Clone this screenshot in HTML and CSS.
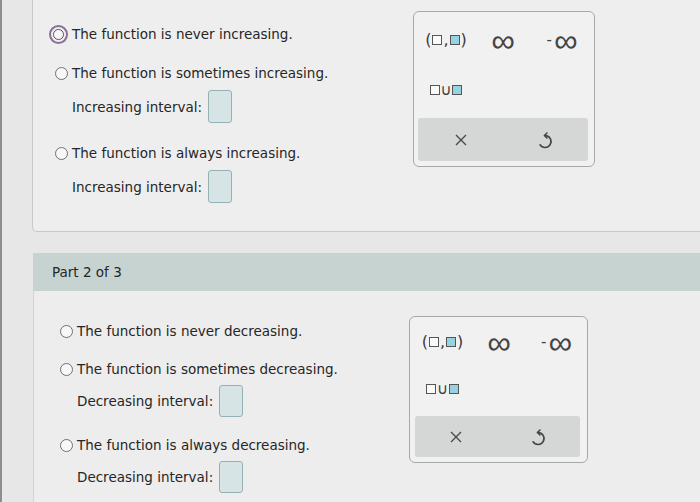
FILE: index.html
```html
<!DOCTYPE html>
<html>
<head>
<meta charset="utf-8">
<link rel="stylesheet" href="styles.css">
</head>
<body>
<div class="page">
  <section class="card">
    <div class="options">
      <div class="opt">
        <span class="radio-slot"><span class="radio selected"></span></span>
        <span class="label">The function is never increasing.</span>
      </div>
      <div class="opt">
        <span class="radio-slot"><span class="radio"></span></span>
        <span class="label">The function is sometimes increasing.</span>
      </div>
      <div class="interval">
        <span>Increasing interval:</span><span class="box"></span>
      </div>
      <div class="opt">
        <span class="radio-slot"><span class="radio"></span></span>
        <span class="label">The function is always increasing.</span>
      </div>
      <div class="interval">
        <span>Increasing interval:</span><span class="box"></span>
      </div>
    </div>
    <div class="palette">
      <div class="keys">
        <span class="key">(<i class="sq"></i>,<i class="sq fill"></i>)</span>
        <span class="key inf">∞</span>
        <span class="key inf"><span class="minus">-</span>∞</span>
        <span class="key union"><i class="sq"></i>∪<i class="sq fill"></i></span>
      </div>
      <div class="bar">
        <span class="act">
          <svg width="12" height="12" viewBox="0 0 12 12"><path d="M1 1 L11 11 M11 1 L1 11" stroke="#4a4a4a" stroke-width="1.4" fill="none"/></svg>
        </span>
        <span class="act">
          <svg width="15" height="18" viewBox="0 0 15 18"><path d="M7 4.5 A6 6 0 1 1 2 13.8" stroke="#444" stroke-width="1.6" fill="none" stroke-linecap="round"/><path d="M9 2 L6.4 4.5 L9 7" stroke="#444" stroke-width="1.6" fill="none" stroke-linecap="round" stroke-linejoin="round"/></svg>
        </span>
      </div>
    </div>
  </section>

  <section class="part">
    <div class="part-head">Part 2 of 3</div>
    <div class="part-body">
      <div class="options tight">
        <div class="opt">
          <span class="radio-slot"><span class="radio"></span></span>
          <span class="label">The function is never decreasing.</span>
        </div>
        <div class="opt">
          <span class="radio-slot"><span class="radio"></span></span>
          <span class="label">The function is sometimes decreasing.</span>
        </div>
        <div class="interval">
          <span>Decreasing interval:</span><span class="box"></span>
        </div>
        <div class="opt">
          <span class="radio-slot"><span class="radio"></span></span>
          <span class="label">The function is always decreasing.</span>
        </div>
        <div class="interval">
          <span>Decreasing interval:</span><span class="box"></span>
        </div>
      </div>
      <div class="palette small">
        <div class="keys">
          <span class="key">(<i class="sq"></i>,<i class="sq fill"></i>)</span>
          <span class="key inf">∞</span>
          <span class="key inf"><span class="minus">-</span>∞</span>
          <span class="key union"><i class="sq"></i>∪<i class="sq fill"></i></span>
        </div>
        <div class="bar">
          <span class="act">
            <svg width="12" height="12" viewBox="0 0 12 12"><path d="M1 1 L11 11 M11 1 L1 11" stroke="#4a4a4a" stroke-width="1.4" fill="none"/></svg>
          </span>
          <span class="act">
            <svg width="15" height="18" viewBox="0 0 15 18"><path d="M7 4.5 A6 6 0 1 1 2 13.8" stroke="#444" stroke-width="1.6" fill="none" stroke-linecap="round"/><path d="M9 2 L6.4 4.5 L9 7" stroke="#444" stroke-width="1.6" fill="none" stroke-linecap="round" stroke-linejoin="round"/></svg>
          </span>
        </div>
      </div>
    </div>
  </section>
</div>
</body>
</html>
```

FILE: styles.css
```css
html, body {
  margin: 0;
  padding: 0;
}

body {
  background: #e7e7e7;
  font-family: "DejaVu Sans", Verdana, sans-serif;
  font-size: 13.5px;
  color: #262626;
  border-left: 2px solid #8e8e8e;
  height: 502px;
  box-sizing: border-box;
  overflow: hidden;
}

.page {
  padding-left: 30px;
  height: 100%;
  display: flex;
  flex-direction: column;
}

.card {
  display: flex;
  align-items: flex-start;
  background: #eeeeee;
  border-left: 1px solid #c9c9c9;
  border-bottom: 1px solid #c9c9c9;
  border-bottom-left-radius: 5px;
  height: 232px;
  box-sizing: border-box;
  padding: 11px 0 0 15px;
}

.options {
  width: 365px;
  flex: none;
  padding-top: 13px;
  display: flex;
  flex-direction: column;
}

.opt {
  display: flex;
  align-items: center;
  height: 20px;
  margin-top: 19px;
  white-space: nowrap;
}

.opt:first-child {
  margin-top: 0;
}

.interval + .opt {
  margin-top: 20px;
}

.radio-slot {
  width: 20px;
  display: flex;
  justify-content: flex-end;
  margin-right: 4px;
}

.radio {
  width: 13px;
  height: 13px;
  box-sizing: border-box;
  border: 1px solid #6f6f6f;
  border-radius: 50%;
  background: #f8f8f8;
}

.radio.selected {
  width: 19px;
  height: 19px;
  border: 2.5px solid #8b6f97;
  background: #eeeeee;
  display: flex;
  align-items: center;
  justify-content: center;
}

.radio.selected::after {
  content: "";
  width: 11px;
  height: 11px;
  box-sizing: border-box;
  border: 1.5px solid #555;
  border-radius: 50%;
  background: #f8f8f8;
}

.interval {
  display: flex;
  align-items: center;
  margin-left: 24px;
  margin-top: 7px;
  height: 33px;
  white-space: nowrap;
}

.box {
  width: 24px;
  height: 33px;
  box-sizing: border-box;
  border: 1.5px solid #93b2b1;
  border-radius: 3px;
  background: #d6e4e6;
  margin-left: 6px;
}

/* part 2 */
.part {
  margin-top: 21px;
  margin-left: 1px;
  flex: 1;
  display: flex;
  flex-direction: column;
}

.part-head {
  height: 38px;
  background: #c6d3d0;
  padding-left: 19px;
  display: flex;
  align-items: center;
  color: #262626;
}

.part-body {
  flex: 1;
  display: flex;
  align-items: flex-start;
  background: #ededed;
  border-left: 1px solid #d3d3d3;
  padding: 25px 0 0 19px;
}

.options.tight {
  width: 356px;
  padding-top: 5px;
}

.tight .opt {
  margin-top: 18px;
}

.tight .opt:first-child {
  margin-top: 0;
}

.tight .interval {
  margin-top: 6px;
  height: 32px;
}

.tight .interval .box {
  height: 32px;
}

.tight .interval + .opt {
  margin-top: 18px;
}

/* palette */
.palette {
  width: 182px;
  height: 156px;
  box-sizing: border-box;
  border: 1px solid #a8a8a8;
  border-radius: 6px;
  background: #f1f1f1;
  padding: 11px 6px 5px 4px;
  display: flex;
  flex-direction: column;
  color: #3a3a3a;
}

.keys {
  display: grid;
  grid-template-columns: 56px 58px 60px;
  grid-auto-rows: 34px;
  row-gap: 16px;
}

.key {
  display: flex;
  align-items: center;
  justify-content: center;
  font-size: 16px;
  line-height: 1;
}

.key.inf {
  font-family: "Liberation Sans", Arial, sans-serif;
  font-size: 33px;
  color: #444;
}

.key .minus {
  font-family: "DejaVu Sans", sans-serif;
  font-size: 15px;
  margin-right: 2px;
}

.sq {
  display: inline-block;
  width: 10px;
  height: 10px;
  box-sizing: border-box;
  border: 1.3px solid #555;
  background: #fafafa;
  margin: 0 1px;
}

.sq.fill {
  background: #97d3df;
}

.union {
  font-size: 15px;
}

.bar {
  margin-top: 11px;
  height: 43px;
  background: #d5d7d7;
  border-radius: 3px;
  display: flex;
}

.act {
  flex: 1;
  display: flex;
  align-items: center;
  justify-content: center;
}

.palette.small {
  width: 179px;
  height: 147px;
  padding: 10px 7px 5px 5px;
}

.small .keys {
  grid-template-columns: 55px 58px 57px;
  grid-auto-rows: 30px;
  row-gap: 17px;
}

.small .bar {
  margin-top: 12px;
  height: 41px;
}
```
